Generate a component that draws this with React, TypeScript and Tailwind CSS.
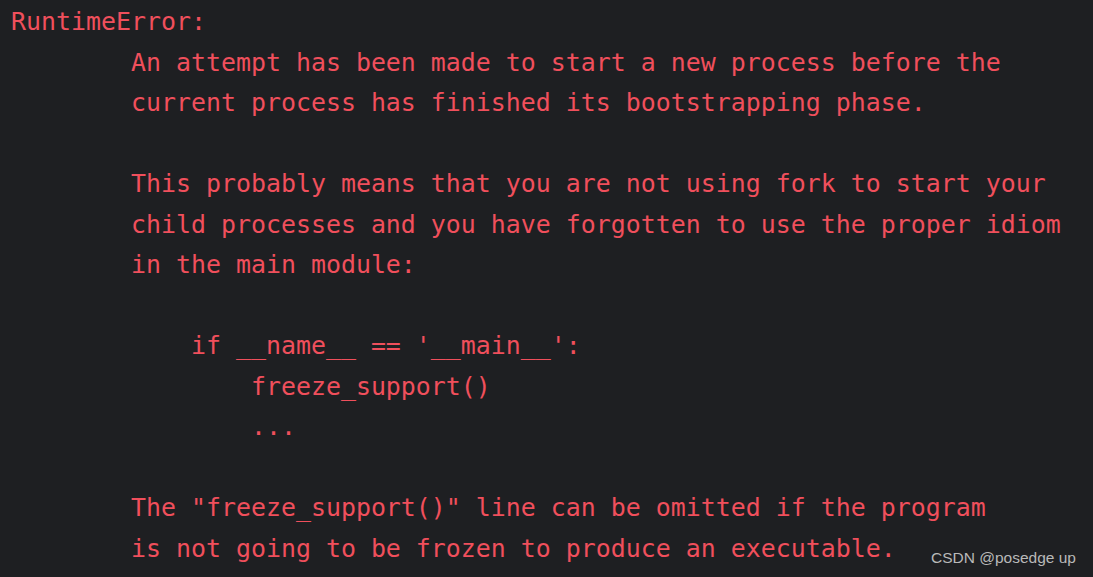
import React from "react";

const lines = [
  "RuntimeError:",
  "        An attempt has been made to start a new process before the",
  "        current process has finished its bootstrapping phase.",
  "",
  "        This probably means that you are not using fork to start your",
  "        child processes and you have forgotten to use the proper idiom",
  "        in the main module:",
  "",
  "            if __name__ == '__main__':",
  "                freeze_support()",
  "                ...",
  "",
  "        The \"freeze_support()\" line can be omitted if the program",
  "        is not going to be frozen to produce an executable.",
];

export default function App() {
  return (
    <div className="relative w-[1093px] h-[577px] overflow-hidden bg-[#1e1f22]">
      <pre
        className="m-0 pl-[11px] pt-[2px] text-[24.92px] leading-[40.5px] text-[#f04f5c] whitespace-pre"
        style={{ fontFamily: '"DejaVu Sans Mono", monospace' }}
      >
        {lines.map((l, i) => (
          <div key={i} className="h-[40.5px]">
            {l}
          </div>
        ))}
      </pre>
      <div
        className="absolute right-[17px] bottom-[11px] text-[15.5px] leading-[16px] text-[#b9b9b9]"
        style={{ fontFamily: '"Liberation Sans", Arial, sans-serif' }}
      >
        CSDN @posedge up
      </div>
    </div>
  );
}
